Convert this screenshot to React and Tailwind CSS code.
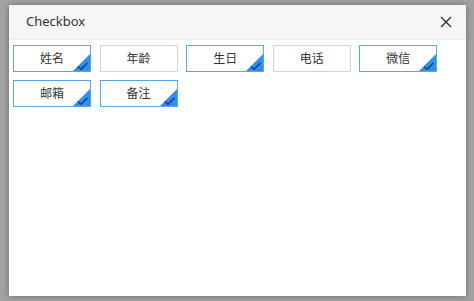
import React from "react";

const items = [
  { label: "姓名", checked: true },
  { label: "年龄", checked: false },
  { label: "生日", checked: true },
  { label: "电话", checked: false },
  { label: "微信", checked: true },
  { label: "邮箱", checked: true },
  { label: "备注", checked: true },
];

function Corner() {
  return (
    <svg className="absolute right-0 bottom-0" width="17" height="17" viewBox="0 0 17 17">
      <polygon points="17,0 17,17 0,17" fill="#2f8ff0" />
      <path d="M5 12.5 L8 15.2 L14.5 9" fill="none" stroke="#14427a" strokeWidth="1.5" />
    </svg>
  );
}

export default function App() {
  return (
    <div
      className="w-[474px] h-[301px] bg-[#a2a2a2] pl-[9px] pt-[5px] overflow-hidden"
      style={{ fontFamily: '"Noto Sans", "Noto Sans CJK SC", sans-serif' }}
    >
      <div className="w-[457px] h-[291px] bg-white flex flex-col shadow-[0_0_6px_rgba(0,0,0,0.35)]">
        <div className="h-[35px] bg-[#f6f6f6] border-b border-[#ececec] flex items-center justify-between pl-[17px] pr-[14px] shrink-0">
          <span className="text-[13px] text-[#333]">Checkbox</span>
          <svg width="12" height="12" viewBox="0 0 12 12">
            <path d="M1 1 L11 11 M11 1 L1 11" stroke="#333" strokeWidth="1.4" />
          </svg>
        </div>
        <div className="flex flex-wrap gap-x-[8.6px] gap-y-[8px] pl-[4px] pt-[5px] w-[450px]">
          {items.map((it) => (
            <div
              key={it.label}
              className={
                "relative w-[78px] h-[27px] flex items-center justify-center text-[12px] text-[#333] border overflow-hidden " +
                (it.checked ? "border-[#5aa6ec]" : "border-[#d3d3d3]")
              }
            >
              {it.label}
              {it.checked && <Corner />}
            </div>
          ))}
        </div>
      </div>
    </div>
  );
}
